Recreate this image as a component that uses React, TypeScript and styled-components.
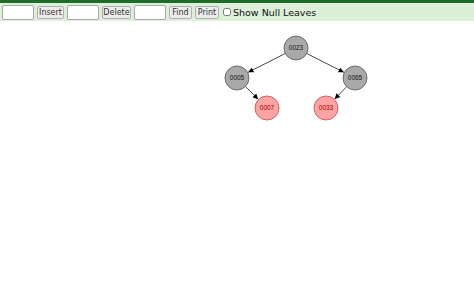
import * as React from 'react'
import styled, { createGlobalStyle } from 'styled-components'

const GlobalStyle = createGlobalStyle`
  html, body {
    margin: 0;
    padding: 0;
    background: #ffffff;
    font-family: "DejaVu Sans", Verdana, sans-serif;
  }
`

const Toolbar = styled.div`
  display: flex;
  align-items: center;
  gap: 3px;
  height: 18px;
  padding: 0 2px;
  background: #dcefd9;
  border-top: 3px solid #1f6b2a;
`

const TextBox = styled.input`
  box-sizing: border-box;
  width: 32px;
  height: 15px;
  margin: 0;
  padding: 0 2px;
  border: 1px solid #a8a8a8;
  border-radius: 2px;
  background: #fff;
  font-size: 8px;
`

const Button = styled.button<{ $w: number }>`
  box-sizing: border-box;
  width: ${(p) => p.$w}px;
  height: 13px;
  margin: 0;
  padding: 0;
  border: 1px solid #b0b0b0;
  border-radius: 2px;
  background: #ececec;
  color: #333333;
  font-family: "DejaVu Sans", Verdana, sans-serif;
  font-size: 8px;
  line-height: 11px;
`

const CheckLabel = styled.label`
  display: flex;
  align-items: center;
  gap: 2px;
  margin-left: 1px;
  font-size: 9.5px;
  color: #111;
`

const Check = styled.input`
  box-sizing: border-box;
  width: 8px;
  height: 8px;
  margin: 0;
`

const Canvas = styled.svg`
  display: block;
`

type Node = { key: string; x: number; y: number; red: boolean }

const nodes: Node[] = [
  { key: '0023', x: 296, y: 48, red: false },
  { key: '0005', x: 237, y: 78, red: false },
  { key: '0065', x: 355, y: 78, red: false },
  { key: '0007', x: 267, y: 108, red: true },
  { key: '0033', x: 326, y: 108, red: true },
]

const edges: [number, number][] = [
  [0, 1],
  [0, 2],
  [1, 3],
  [2, 4],
]

const R = 12

const App: React.FC = () => {
  return (
    <>
      <GlobalStyle />
      <Toolbar>
        <TextBox />
        <Button $w={27}>Insert</Button>
        <TextBox />
        <Button $w={29}>Delete</Button>
        <TextBox />
        <Button $w={23}>Find</Button>
        <Button $w={24}>Print</Button>
        <CheckLabel>
          <Check type="checkbox" />
          Show Null Leaves
        </CheckLabel>
      </Toolbar>
      <Canvas width={474} height={280} viewBox="0 21 474 280">
        <defs>
          <marker id="arrow" viewBox="0 0 10 10" refX="10" refY="5" markerWidth="6" markerHeight="6" orient="auto">
            <path d="M0,0 L10,5 L0,10 z" fill="#000" />
          </marker>
        </defs>
        {edges.map(([a, b], i) => {
          const p = nodes[a]
          const c = nodes[b]
          const dx = c.x - p.x
          const dy = c.y - p.y
          const len = Math.sqrt(dx * dx + dy * dy)
          const ux = dx / len
          const uy = dy / len
          return (
            <line
              key={i}
              x1={p.x + ux * R}
              y1={p.y + uy * R}
              x2={c.x - ux * (R + 0.5)}
              y2={c.y - uy * (R + 0.5)}
              stroke="#333"
              strokeWidth={0.9}
              markerEnd="url(#arrow)"
            />
          )
        })}
        {nodes.map((n) => (
          <g key={n.key}>
            <circle
              cx={n.x}
              cy={n.y}
              r={R}
              fill={n.red ? '#ffa3a3' : '#a9a9a9'}
              stroke={n.red ? '#c84848' : '#555'}
              strokeWidth={0.8}
            />
            <text
              x={n.x}
              y={n.y + 2.2}
              textAnchor="middle"
              fontFamily='"Liberation Sans", Arial, sans-serif'
              fontSize={6.5}
              fill={n.red ? '#a00000' : '#111'}
            >
              {n.key}
            </text>
          </g>
        ))}
      </Canvas>
    </>
  )
}

export default App
